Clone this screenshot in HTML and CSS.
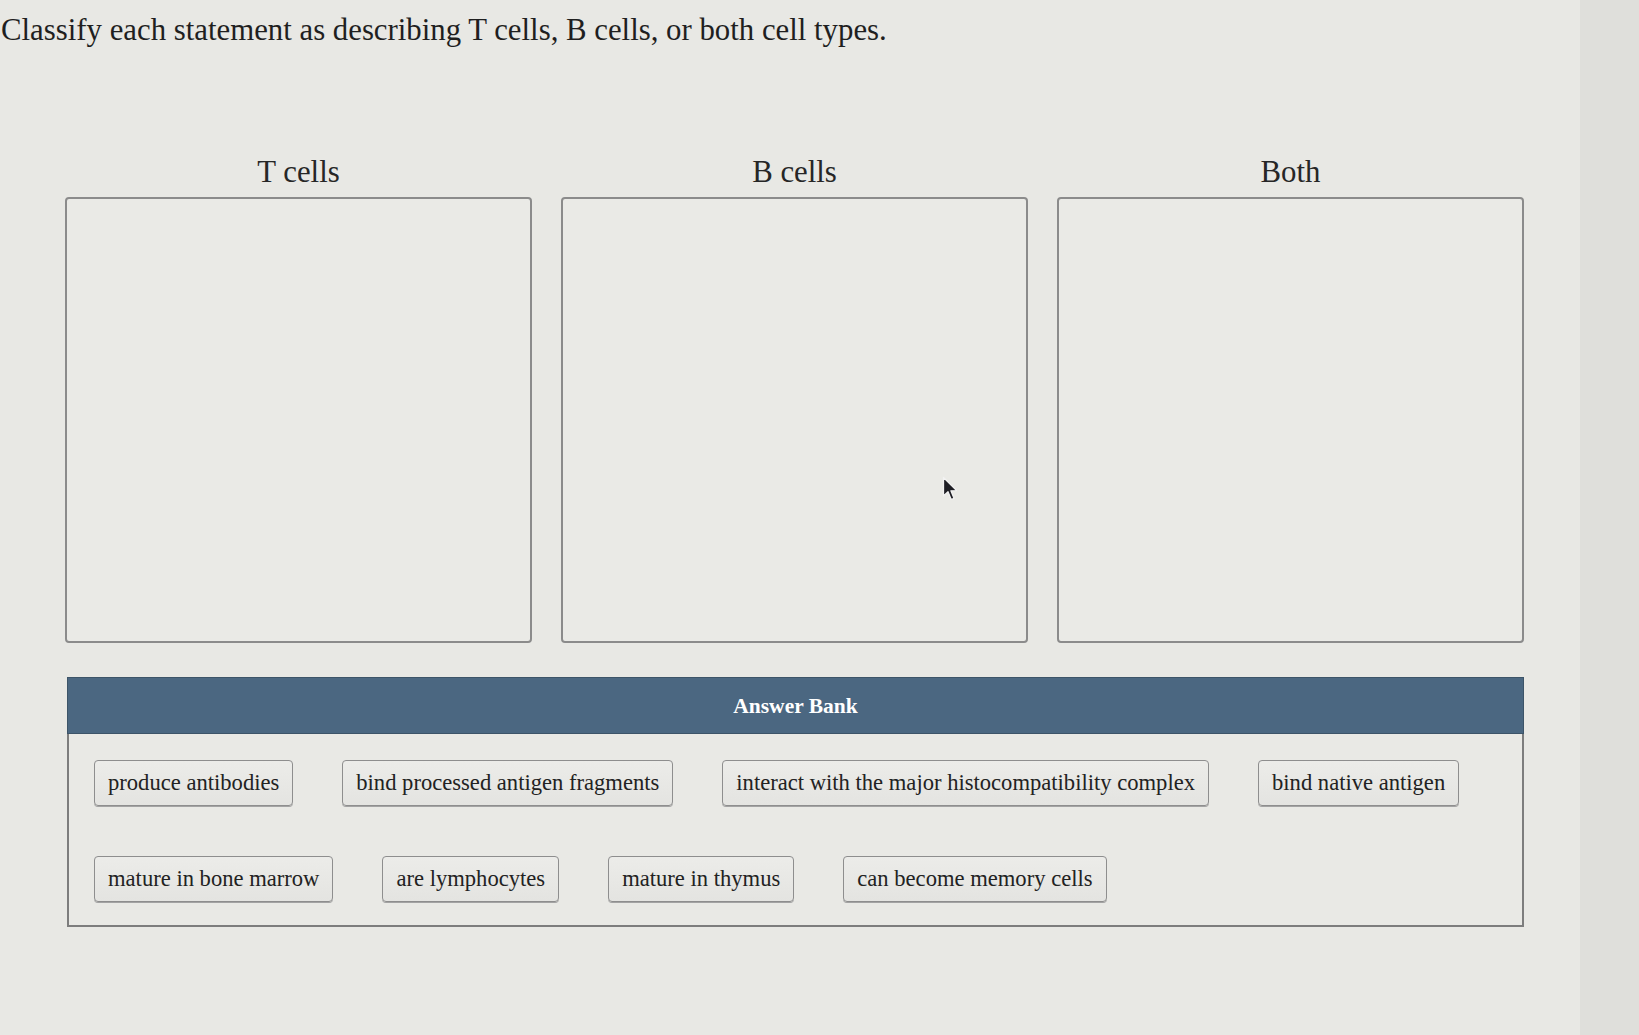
FILE: index.html
```
<!DOCTYPE html>
<html lang="en">
<head>
<meta charset="utf-8">
<title>Classify T cells and B cells</title>
<link rel="stylesheet" href="styles.css">
</head>
<body>
<div class="page">
  <h1 class="question">Classify each statement as describing T cells, B cells, or both cell types.</h1>

  <div class="columns">
    <div class="column">
      <div class="label">T cells</div>
      <div class="dropbox"></div>
    </div>
    <div class="column">
      <div class="label">B cells</div>
      <div class="dropbox"></div>
    </div>
    <div class="column">
      <div class="label">Both</div>
      <div class="dropbox"></div>
    </div>
  </div>

  <div class="bank">
    <div class="bank-header">Answer Bank</div>
    <div class="bank-body">
      <div class="chip">produce antibodies</div>
      <div class="chip">bind processed antigen fragments</div>
      <div class="chip">interact with the major histocompatibility complex</div>
      <div class="chip">bind native antigen</div>
      <div class="chip">mature in bone marrow</div>
      <div class="chip">are lymphocytes</div>
      <div class="chip">mature in thymus</div>
      <div class="chip">can become memory cells</div>
    </div>
  </div>
</div>

<svg class="cursor" width="16" height="26" viewBox="0 0 16 26" aria-hidden="true">
  <path d="M1.5 1.5 L1.5 20 L6 15.8 L9.2 23.5 L12 22.3 L8.9 14.8 L14.6 14.6 Z" fill="#1e1e24" stroke="#f2f2f2" stroke-width="1.3" stroke-linejoin="round"/>
</svg>
</body>
</html>
```

FILE: styles.css
```
html, body {
  margin: 0;
  padding: 0;
}

body {
  background: #dfdfdb;
  font-family: "Liberation Serif", "Times New Roman", serif;
  color: #262626;
  width: 1639px;
  height: 1035px;
  overflow: hidden;
  position: relative;
}

.page {
  width: 1580px;
  height: 1035px;
  background: #e8e8e4;
  padding-top: 12px;
  box-sizing: border-box;
}

.question {
  margin: 0;
  padding-left: 1px;
  font-size: 30.8px;
  line-height: 36px;
  font-weight: normal;
  color: #1f1f1f;
  white-space: nowrap;
}

.columns {
  display: grid;
  grid-template-columns: repeat(3, 467px);
  column-gap: 29px;
  margin-left: 65px;
  margin-top: 106px;
}

.column {
  display: flex;
  flex-direction: column;
}

.label {
  font-size: 30.8px;
  line-height: 36px;
  text-align: center;
  color: #262626;
}

.dropbox {
  margin-top: 7px;
  height: 446px;
  box-sizing: border-box;
  border: 2px solid #8b8b8b;
  border-radius: 4px;
  background: #eaeae6;
}

.bank {
  margin-top: 34px;
  margin-left: 67px;
  width: 1457px;
}

.bank-header {
  height: 57px;
  background: #4b6781;
  color: #ffffff;
  font-weight: bold;
  font-size: 21.5px;
  line-height: 57px;
  text-align: center;
  border: 1px solid #3d5468;
  box-sizing: border-box;
}

.bank-body {
  display: flex;
  flex-wrap: wrap;
  column-gap: 49px;
  row-gap: 50px;
  padding: 26px 25px 23px 25px;
  border: 2px solid #7d7d7d;
  border-top: none;
  background: #e9e9e5;
}

.chip {
  font-size: 22.6px;
  line-height: 26px;
  padding: 9px 13px;
  border: 1px solid #8e8e8e;
  border-radius: 4px;
  background: linear-gradient(#ecece9, #e4e4e1);
  box-shadow: 0 1px 0 #a3a3a3;
  color: #222222;
  white-space: nowrap;
}

.cursor {
  position: absolute;
  left: 942px;
  top: 476px;
}
```
